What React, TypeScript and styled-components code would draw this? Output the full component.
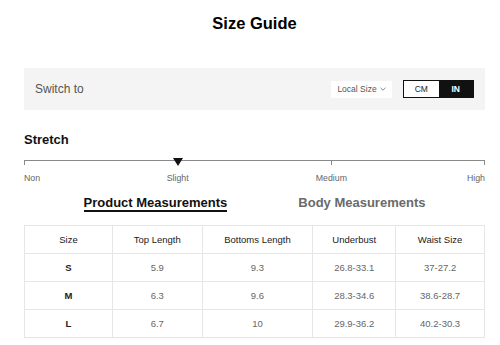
import styled, { createGlobalStyle } from "styled-components";

const GlobalStyle = createGlobalStyle`
  body {
    margin: 0;
    background: #fff;
    font-family: "Liberation Sans", Arial, sans-serif;
  }
`;

const Page = styled.div`
  padding: 0 15px 0 24px;
  display: flex;
  flex-direction: column;
`;

const Title = styled.h1`
  margin: 0;
  height: 46px;
  line-height: 46px;
  text-align: center;
  font-size: 16.5px;
  font-weight: 700;
  color: #000;
`;

const Toolbar = styled.div`
  margin-top: 22px;
  height: 42px;
  background: #f4f4f4;
  display: flex;
  align-items: center;
  justify-content: space-between;
  padding: 0 11px;
`;

const SwitchLabel = styled.span`
  font-size: 12px;
  color: #555;
`;

const Controls = styled.div`
  display: flex;
  align-items: center;
  gap: 11px;
`;

const LocalSelect = styled.div`
  width: 61px;
  height: 17px;
  background: #fff;
  display: flex;
  align-items: center;
  justify-content: center;
  gap: 3px;
  font-size: 8.5px;
  color: #555;
`;

const UnitToggle = styled.div`
  display: flex;
  width: 71px;
  height: 18px;
  border: 1px solid #111;
  box-sizing: border-box;
`;

const UnitOption = styled.div<{ $active?: boolean }>`
  flex: 1;
  display: flex;
  align-items: center;
  justify-content: center;
  font-size: 8.5px;
  font-weight: ${(p) => (p.$active ? 700 : 400)};
  background: ${(p) => (p.$active ? "#111" : "#fff")};
  color: ${(p) => (p.$active ? "#fff" : "#222")};
`;

const SectionTitle = styled.h2`
  margin: 22px 0 0;
  line-height: 16px;
  font-size: 13px;
  font-weight: 700;
  color: #111;
`;

const Scale = styled.div`
  position: relative;
  margin-top: 12px;
  height: 25px;
  border-top: 1px solid #8a8a8a;

  &::before,
  &::after {
    content: "";
    position: absolute;
    top: 0;
    width: 1px;
    height: 4px;
    background: #8a8a8a;
  }
  &::before {
    left: 0;
  }
  &::after {
    right: 0;
  }
`;

const Tick = styled.span<{ $at: number }>`
  position: absolute;
  top: 0;
  left: ${(p) => p.$at}%;
  width: 1px;
  height: 4px;
  background: #8a8a8a;
`;

const Marker = styled.span<{ $at: number }>`
  position: absolute;
  top: -3px;
  left: ${(p) => p.$at}%;
  transform: translateX(-50%);
  width: 0;
  height: 0;
  border-left: 5.5px solid transparent;
  border-right: 5.5px solid transparent;
  border-top: 8px solid #111;
`;

const ScaleLabel = styled.span<{ $at: number; $align: "start" | "center" | "end" }>`
  position: absolute;
  top: 12px;
  left: ${(p) => p.$at}%;
  transform: ${(p) =>
    p.$align === "center" ? "translateX(-50%)" : p.$align === "end" ? "translateX(-100%)" : "none"};
  font-size: 8.8px;
  line-height: 10px;
  color: #666;
  white-space: nowrap;
`;

const Tabs = styled.div`
  display: flex;
  justify-content: center;
  gap: 71px;
  margin-top: 10px;
`;

const Tab = styled.div<{ $active?: boolean }>`
  font-size: 13px;
  font-weight: 700;
  line-height: 14px;
  color: ${(p) => (p.$active ? "#111" : "#6a6a6a")};
  border-bottom: 2.5px solid ${(p) => (p.$active ? "#111" : "transparent")};
`;

const Table = styled.table`
  margin-top: 13px;
  width: 100%;
  border-collapse: collapse;
  table-layout: fixed;
`;

const Th = styled.th<{ $w: number }>`
  width: ${(p) => p.$w}%;
  height: 27px;
  padding: 0;
  border: 1px solid #e6e6e6;
  font-size: 9.5px;
  font-weight: 400;
  color: #1a1a1a;
  text-align: center;
`;

const Td = styled.td<{ $head?: boolean }>`
  height: 27px;
  padding: 0;
  border: 1px solid #e6e6e6;
  font-size: 9.5px;
  font-weight: ${(p) => (p.$head ? 700 : 400)};
  color: ${(p) => (p.$head ? "#222" : "#666")};
  text-align: center;
`;

const columns = [
  { label: "Size", w: 19.1 },
  { label: "Top Length", w: 19.5 },
  { label: "Bottoms Length", w: 24.1 },
  { label: "Underbust", w: 18 },
  { label: "Waist Size", w: 19.3 },
];

const rows = [
  ["S", "5.9", "9.3", "26.8-33.1", "37-27.2"],
  ["M", "6.3", "9.6", "28.3-34.6", "38.6-28.7"],
  ["L", "6.7", "10", "29.9-36.2", "40.2-30.3"],
];

const stretch: { label: string; at: number; align: "start" | "center" | "end" }[] = [
  { label: "Non", at: 0, align: "start" },
  { label: "Slight", at: 100 / 3, align: "center" },
  { label: "Medium", at: 200 / 3, align: "center" },
  { label: "High", at: 100, align: "end" },
];

const Chevron = () => (
  <svg width="6" height="4" viewBox="0 0 6 4">
    <path d="M0.5 0.8 L3 3.2 L5.5 0.8" fill="none" stroke="#666" strokeWidth="0.8" />
  </svg>
);

export default function App() {
  return (
    <Page>
      <GlobalStyle />
      <Title>Size Guide</Title>
      <Toolbar>
        <SwitchLabel>Switch to</SwitchLabel>
        <Controls>
          <LocalSelect>
            Local Size <Chevron />
          </LocalSelect>
          <UnitToggle>
            <UnitOption>CM</UnitOption>
            <UnitOption $active>IN</UnitOption>
          </UnitToggle>
        </Controls>
      </Toolbar>
      <SectionTitle>Stretch</SectionTitle>
      <Scale>
        <Tick $at={200 / 3} />
        <Marker $at={100 / 3} />
        {stretch.map((s) => (
          <ScaleLabel key={s.label} $at={s.at} $align={s.align}>
            {s.label}
          </ScaleLabel>
        ))}
      </Scale>
      <Tabs>
        <Tab $active>Product Measurements</Tab>
        <Tab>Body Measurements</Tab>
      </Tabs>
      <Table>
        <thead>
          <tr>
            {columns.map((c) => (
              <Th key={c.label} $w={c.w}>
                {c.label}
              </Th>
            ))}
          </tr>
        </thead>
        <tbody>
          {rows.map((r) => (
            <tr key={r[0]}>
              {r.map((v, i) => (
                <Td key={i} $head={i === 0}>
                  {v}
                </Td>
              ))}
            </tr>
          ))}
        </tbody>
      </Table>
    </Page>
  );
}
